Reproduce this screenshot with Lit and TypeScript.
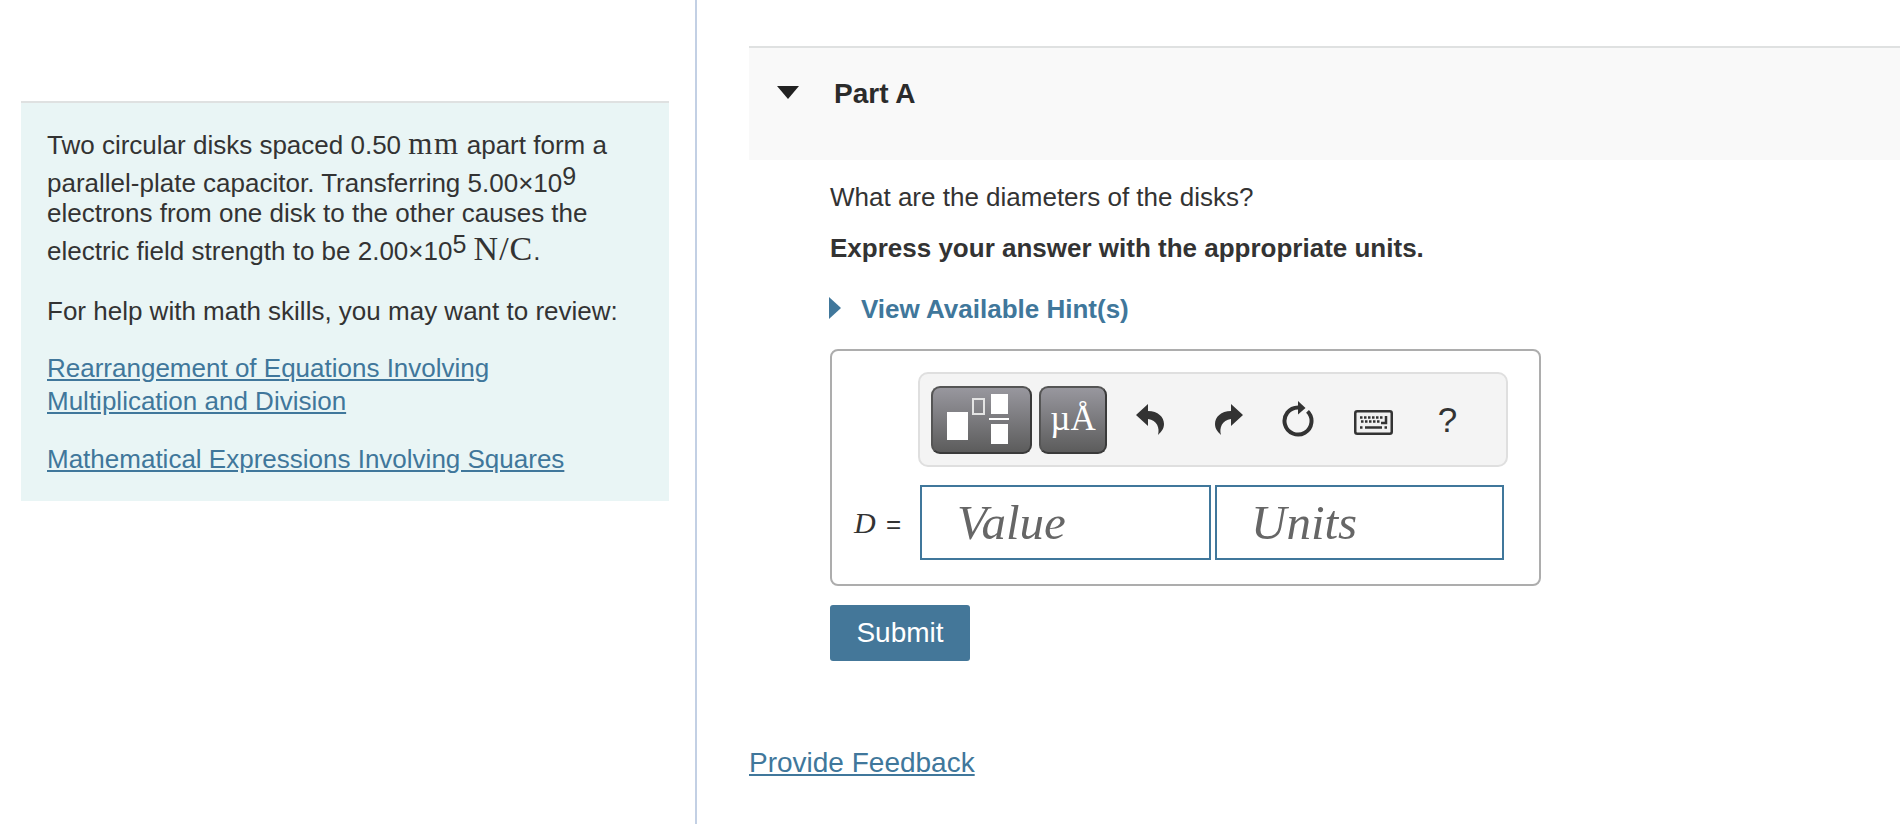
import { LitElement, html, css } from "lit";
import { customElement } from "lit/decorators.js";

@customElement("app-root")
export class AppRoot extends LitElement {
  static styles = css`
    :host { display: block; height: 824px; overflow: hidden; font-family: "Liberation Sans", Arial, sans-serif; color: #333; background: #fff; }
    .page { display: flex; height: 824px; }
    .left { width: 695px; flex: none; border-right: 2px solid #c3d0e4; padding-top: 101px; box-sizing: content-box; }
    .panel { margin-left: 21px; width: 648px; height: 400px; box-sizing: border-box; background: #e9f5f5; border-top: 2px solid #dfe1e1; padding: 26px 0 0 26px; font-size: 26px; }
    .ln { height: 33px; line-height: 33px; white-space: nowrap; }
    .l2 { margin-top: 5px; }
    .l3 { margin-top: -3px; }
    .l4 { margin-top: 5px; }
    .l5 { margin-top: 27px; }
    .l6 { margin-top: 24px; }
    .l8 { margin-top: 25px; }
    .m { font-family: "Liberation Serif", serif; font-size: 31px; letter-spacing: 1.5px; line-height: 0; }
    .nc { font-family: "Liberation Serif", serif; font-size: 34px; letter-spacing: 1px; line-height: 0; }
    .sup { font-size: 25px; line-height: 0; vertical-align: 7px; }
    a { color: #40779b; text-decoration: underline; }
    .right { flex: 1; padding-top: 46px; min-width: 0; padding-left: 52px; }
    .head { height: 114px; box-sizing: border-box; border-top: 2px solid #dfe1e1; background: #f9f9f9; display: flex; align-items: flex-start; padding: 31px 0 0 28px; }
    .caret { width: 22px; height: 13px; margin-top: 7px; flex: none; }
    .title { margin-left: 35px; font-weight: bold; font-size: 28px; line-height: 30px; color: #2b2b2b; }
    .body { padding-left: 81px; }
    .q { font-size: 26px; line-height: 30px; margin-top: 22px; }
    .ex { font-size: 26px; line-height: 30px; margin-top: 21px; font-weight: bold; }
    .hint { display: flex; align-items: center; margin-top: 31px; height: 30px; color: #40779b; font-weight: bold; font-size: 26px; }
    .hint svg { width: 12px; height: 22px; margin-right: 20px; margin-top: -3px; margin-left: -1px; }
    .box { margin-top: 25px; width: 711px; height: 237px; box-sizing: border-box; border: 2px solid #adadad; border-radius: 8px; padding: 21px 0 0 86px; }
    .bar { width: 590px; height: 95px; box-sizing: border-box; border: 2px solid #dfdfdf; border-radius: 10px; background: #f4f4f4; display: flex; align-items: center; padding-left: 11px; }
    .btn { height: 68px; box-sizing: border-box; border-radius: 9px; border: 2px solid #3a3a3a; border-top-color: #555; border-left-color: #555; background: linear-gradient(#98979e, #5c5c5c); flex: none; }
    .b1 { width: 101px; margin-right: 7px; }
    .b1 svg { display: block; width: 97px; height: 64px; }
    .b2 { width: 68px; display: flex; justify-content: center; color: #fff; font-family: "Liberation Serif", serif; font-size: 35px; line-height: 62px; }
    .slot { display: flex; justify-content: center; align-items: center; flex: none; height: 68px; box-sizing: border-box; }
    .s1 { width: 85px; }
    .s2 { width: 74px; }
    .s3 { width: 64px; }
    .s4 { width: 86px; padding-top: 5px; }
    .s5 { width: 63px; font-size: 35px; color: #333; }
    .row { display: flex; align-items: flex-start; margin-top: 18px; margin-left: -86px; padding-left: 22px; }
    .lab { width: 66px; flex: none; font-size: 26px; line-height: 75px; white-space: nowrap; word-spacing: 3px; }
    .lab i { font-family: "Liberation Serif", serif; font-size: 30px; }
    .inp { width: 291px; height: 75px; box-sizing: border-box; border: 2px solid #40779b; background: #fff; font-family: "Liberation Serif", serif; font-style: italic; font-size: 49px; line-height: 71px; color: #666; padding-left: 35px; }
    .inp + .inp { margin-left: 4px; width: 289px; padding-left: 34px; }
    .submit { display: block; margin-top: 19px; width: 140px; height: 56px; border: 0; border-radius: 3px; background: #447799; color: #fff; font-family: inherit; font-size: 28px; padding: 0; }
    .fb { margin-top: 87px; font-size: 28px; line-height: 30px; }
  `;

  render() {
    return html`
      <div class="page">
        <div class="left">
          <div class="panel">
            <div class="ln">Two circular disks spaced 0.50 <span class="m">mm</span> apart form a</div>
            <div class="ln l2">parallel-plate capacitor. Transferring 5.00×10<span class="sup">9</span></div>
            <div class="ln l3">electrons from one disk to the other causes the</div>
            <div class="ln l4">electric field strength to be 2.00×10<span class="sup">5</span> <span class="nc">N/C</span>.</div>
            <div class="ln l5">For help with math skills, you may want to review:</div>
            <div class="ln l6"><a href="#">Rearrangement of Equations Involving</a></div>
            <div class="ln"><a href="#">Multiplication and Division</a></div>
            <div class="ln l8"><a href="#">Mathematical Expressions Involving Squares</a></div>
          </div>
        </div>
        <div class="right">
          <div class="head">
            <svg class="caret" viewBox="0 0 22 13"><path d="M0 0H22L11 13Z" fill="#222"/></svg>
            <div class="title">Part A</div>
          </div>
          <div class="body">
            <div class="q">What are the diameters of the disks?</div>
            <div class="ex">Express your answer with the appropriate units.</div>
            <div class="hint">
              <svg viewBox="0 0 12 22"><path d="M0 0L12 11L0 22Z" fill="#40779b"/></svg>
              View Available Hint(s)
            </div>
            <div class="box">
              <div class="bar">
                <div class="btn b1">
                  <svg viewBox="0 0 97 64">
                    <rect x="14" y="24" width="21" height="28" fill="#fff"/>
                    <rect x="40" y="11" width="11" height="15" fill="none" stroke="#e4e4e4" stroke-width="2"/>
                    <rect x="58" y="6" width="17" height="20" fill="#fff"/>
                    <rect x="56" y="30" width="20" height="2" fill="#fff"/>
                    <rect x="58" y="36" width="17" height="20" fill="#fff"/>
                  </svg>
                </div>
                <div class="btn b2">µÅ</div>
                <div class="slot s1">
                  <svg width="28" height="32" viewBox="0 0 28 32"><path d="M0 11L12 0V7C22 7 28 13 28 20C28 25 25 28 22 31C24 24 21 16 12 15V22Z" fill="#333"/></svg>
                </div>
                <div class="slot s2">
                  <svg width="28" height="32" viewBox="0 0 28 32"><path d="M28 11L16 0V7C6 7 0 13 0 20C0 25 3 28 6 31C4 24 7 16 16 15V22Z" fill="#333"/></svg>
                </div>
                <div class="slot s3">
                  <svg width="34" height="37" viewBox="-17 -20 34 37"><path d="M0 -13.500A13.500 13.500 0 1 0 9.500 -9.600" fill="none" stroke="#333" stroke-width="4"/><path d="M0 -20L7.500 -13L0 -6.500Z" fill="#333"/></svg>
                </div>
                <div class="slot s4">
                  <svg width="39" height="25" viewBox="0 0 39 25">
                    <rect x="1.250" y="1.250" width="36.500" height="22.500" rx="2" fill="#f1f1f1" stroke="#333" stroke-width="2.500"/>
                    <path d="M6 7.500h2.500M10 7.500h2.500M14 7.500h2.500M18 7.500h2.500M22 7.500h2.500M26 7.500h2.500M7 11.500h2.500M11 11.500h2.500M15 11.500h2.500M19 11.500h2.500M23 11.500h2.500M32 6v7h-5M6 17.500h2.500M11 17.500h17M30.500 17.500h2.500" stroke="#333" stroke-width="2.500" fill="none"/>
                  </svg>
                </div>
                <div class="slot s5">?</div>
              </div>
              <div class="row">
                <div class="lab"><i>D</i> =</div>
                <div class="inp">Value</div>
                <div class="inp">Units</div>
              </div>
            </div>
            <button class="submit">Submit</button>
          </div>
          <div class="fb"><a href="#">Provide Feedback</a></div>
        </div>
      </div>
    `;
  }
}
